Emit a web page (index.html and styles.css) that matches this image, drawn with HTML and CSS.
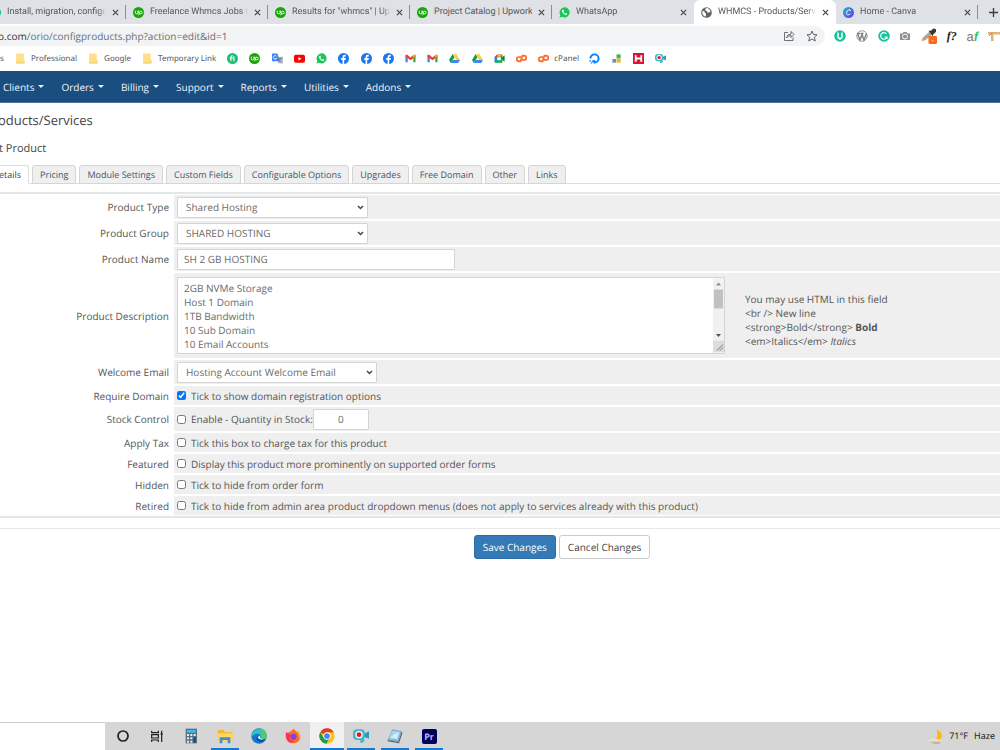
FILE: index.html
```html
<!DOCTYPE html>
<html lang="en">
<head>
<meta charset="utf-8">
<title>WHMCS - Products/Services</title>
<link rel="stylesheet" href="styles.css">
</head>
<body>
<svg class="defs" aria-hidden="true">
  <symbol id="up" viewBox="0 0 24 24"><circle cx="12" cy="12" r="12" fill="#14a800"/><path d="M5 8v4a3 3 0 0 0 6 0V8c1 4 3 7 6 7a3 3 0 1 0-3-3l-1.500 6" fill="none" stroke="#fff" stroke-width="2"/></symbol>
  <symbol id="fi" viewBox="0 0 24 24"><circle cx="12" cy="12" r="12" fill="#1dbf73"/><path d="M6 11h9v7M8.500 18V9q0-3 4-3M15 7v2" fill="none" stroke="#fff" stroke-width="2.400"/></symbol>
  <symbol id="wa" viewBox="0 0 24 24"><path d="M1 23l1.800-5.500A11 11 0 1 1 7 21.500z" fill="#20c45a"/><path d="M8 6q-3 2-1 5 3 6 8 6.500 3-.5 3-3l-3-1.500-1.500 1.500Q11 13.500 9.500 11L11 9.500 9.500 6z" fill="#fff"/></symbol>
  <symbol id="fb" viewBox="0 0 24 24"><circle cx="12" cy="12" r="12" fill="#1877f2"/><path d="M10 24v-9H7v-4h3V9q0-5 4.500-5H17v3.500h-2q-1.500 0-1.500 2V11H17l-.5 4h-3v9z" fill="#fff"/></symbol>
  <symbol id="gm" viewBox="0 0 24 24"><path d="M1 5v15h5V10z" fill="#4285f4"/><path d="M23 5v15h-5V10z" fill="#34a853"/><path d="M1 4l4 0 7 6 7-6h4v4l-11 8L1 8z" fill="#ea4335"/><path d="M18 5l3-1q2 0 2 3l-5 4z" fill="#fbbc04"/></symbol>
  <symbol id="gd" viewBox="0 0 24 24"><path d="M8 2l4 7-8 13-4-7z" fill="#0f9d58"/><path d="M8 2h8l8 13h-8z" fill="#ffcd40"/><path d="M8 15h16l-4 7H4z" fill="#4285f4"/></symbol>
  <symbol id="meet" viewBox="0 0 24 24"><path d="M1 9l6-6h11v6H7v10H1z" fill="#2684fc"/><path d="M7 3h11v5H7z" fill="#ffba00"/><path d="M7 16h11v5H3q-2 0-2-2z" fill="#00ac47"/><path d="M1 9l6-6v6z" fill="#ea4335"/><path d="M15 12l8-7v14z" fill="#00832d"/><path d="M15 5h3v14h-3z" fill="#00ac47"/></symbol>
  <symbol id="cp" viewBox="0 0 24 24"><path d="M11 9H6a4 4 0 0 0 0 9h4l4-12h4a4.500 4.500 0 0 1 0 9h-5" fill="none" stroke="#ff6c2c" stroke-width="4"/></symbol>
  <symbol id="tr" viewBox="0 0 24 24"><path d="M9 8h15v15H14z" fill="#b9bdc3"/><path d="M0 1h12l5 17H0z" fill="#4285f4"/><path d="M10 7a4 4 0 1 0 0 5H7" fill="none" stroke="#fff" stroke-width="1.600"/><path d="M14 12h8M18 10v2q0 5-4 8M15 13q2 5 6 7" fill="none" stroke="#6b7480" stroke-width="1.600"/></symbol>
  <symbol id="yt" viewBox="0 0 24 24"><rect y="4" width="24" height="17" rx="4" fill="#f00"/><path d="M9.500 8.500v8l7-4z" fill="#fff"/></symbol>
  <symbol id="oc" viewBox="0 0 24 24"><path d="M3 12a9 9 0 1 1 9 9v-5" fill="none" stroke="#0080ff" stroke-width="4.200"/><path d="M7 16h5v4H7zM4 20h3v3H4zM1 16h3v3H1z" fill="#0080ff"/></symbol>
  <symbol id="sq" viewBox="0 0 24 24"><path d="M12 3h9v9h-9z" fill="#4caf50"/><path d="M3 13h8v8H3z" fill="#7986cb"/><path d="M12 13h9v8h-9z" fill="#f4b619"/></symbol>
  <symbol id="hh" viewBox="0 0 24 24"><path d="M0 0h24v24H0z" fill="#db1430"/><path d="M4 5h4v5h8V5h4v14h-4v-5H8v5H4z" fill="#fff"/></symbol>
  <symbol id="rec" viewBox="0 0 24 24"><path d="M16 9l8-4v11l-8-3z" fill="#2a9eae"/><rect y="2" width="18" height="16" rx="6" fill="#3fb9ce"/><path d="M11 17h7l-3 5h-4z" fill="#3fb9ce"/><circle cx="9" cy="10" r="5.500" fill="#fff"/><circle cx="9" cy="10" r="3.600" fill="#e21b23"/></symbol>
  <symbol id="globe" viewBox="0 0 24 24"><circle cx="12" cy="12" r="11.500" fill="#5f6368"/><path d="M3 9q5-1 5 2t3 3v4l-2 3Q2 17 3 9M10 3l-1 4 4 2 1 3h4l3-2Q19 3 14 2z" fill="#fff"/></symbol>
  <symbol id="canva" viewBox="0 0 24 24"><linearGradient id="cg" x2="1" y2="1"><stop stop-color="#16b9cd"/><stop offset="1" stop-color="#7730e6"/></linearGradient><circle cx="12" cy="12" r="12" fill="url(#cg)"/><path d="M16 9q1-4-3-3-6 2-5.500 8 1.500 6 8.500 1" fill="none" stroke="#fff" stroke-width="2"/></symbol>
  <symbol id="x" viewBox="0 0 8 8"><path d="M1 1l6 6M7 1L1 7" stroke="#45484c" stroke-width="1.400"/></symbol>
  <symbol id="folder" viewBox="0 0 18 20"><path d="M1 1h14v11l2 1v6H1z" fill="#ffe08a"/><path d="M1 17h14v2H1z" fill="#f4ce67"/></symbol>
</svg>

<header class="browser">
  <div class="tabs">
    <div class="tab tab-first"><svg class="fav"><use href="#fi"/></svg><span class="tab-title">Install, migration, configuration</span><button class="close" aria-label="Close tab"><svg><use href="#x"/></svg></button></div>
    <div class="tab"><svg class="fav"><use href="#up"/></svg><span class="tab-title">Freelance Whmcs Jobs Online</span><button class="close" aria-label="Close tab"><svg><use href="#x"/></svg></button></div>
    <div class="tab"><svg class="fav"><use href="#up"/></svg><span class="tab-title">Results for "whmcs" | Upwork</span><button class="close" aria-label="Close tab"><svg><use href="#x"/></svg></button></div>
    <div class="tab"><svg class="fav"><use href="#up"/></svg><span class="tab-title tab-fits">Project Catalog | Upwork</span><button class="close" aria-label="Close tab"><svg><use href="#x"/></svg></button></div>
    <div class="tab tab-before"><svg class="fav"><use href="#wa"/></svg><span class="tab-title">WhatsApp</span><button class="close" aria-label="Close tab"><svg><use href="#x"/></svg></button></div>
    <div class="tab tab-active"><svg class="fav"><use href="#globe"/></svg><span class="tab-title">WHMCS - Products/Services</span><button class="close" aria-label="Close tab"><svg><use href="#x"/></svg></button></div>
    <div class="tab"><svg class="fav"><use href="#canva"/></svg><span class="tab-title">Home - Canva</span><button class="close" aria-label="Close tab"><svg><use href="#x"/></svg></button></div>
    <button class="new-tab" aria-label="New tab"><svg viewBox="0 0 10 10"><path d="M5 0v10M0 5h10" stroke="#3c4043" stroke-width="1.500"/></svg></button>
  </div>

  <div class="toolbar">
    <div class="omnibox">
      <span class="url"><span class="host">o.com</span>/orio/configproducts.php?action=edit&amp;id=1</span>
      <svg viewBox="0 0 24 24"><path d="M10 5H3v16h17v-6M7 16q1-8 9-8V3l6 6-6 6v-4q-6 0-9 5z" fill="none" stroke="#5f6368" stroke-width="1.800"/></svg>
      <svg viewBox="0 0 24 24"><path d="M12 2l3 7 7 .7-5.300 4.700L18.500 22 12 18l-6.500 4 1.800-7.600L2 9.700 9 9z" fill="none" stroke="#5f6368" stroke-width="2"/></svg>
    </div>
    <div class="extensions">
      <svg viewBox="0 0 24 24"><circle cx="12" cy="12" r="11.500" fill="#15c39a"/><path d="M8 5v8a4 4 0 0 0 8 0V5M12 16v4" fill="none" stroke="#fff" stroke-width="3"/></svg>
      <svg viewBox="0 0 24 24"><circle cx="12" cy="12" r="10.500" fill="none" stroke="#7d7f82" stroke-width="1.500"/><path d="M3 7l5 13 4-11 4 11 5-13M2 7h6M9 7h6" fill="none" stroke="#7d7f82" stroke-width="2.800"/></svg>
      <svg viewBox="0 0 24 24"><circle cx="12" cy="12" r="11.500" fill="#15c39a"/><path d="M17 8a6.500 6.500 0 1 0 1 6h-5M18 14v4" fill="none" stroke="#fff" stroke-width="2.400"/></svg>
      <svg viewBox="0 0 24 24"><path d="M2 7h5l2-3h6l2 3h5v13H2z" fill="#909090"/><circle cx="12" cy="13" r="5" fill="none" stroke="#fff" stroke-width="2"/></svg>
      <svg class="wide" viewBox="0 0 28 28"><path d="M1 23l2-6L15 6l5 5L8 21z" fill="#b9a18e"/><path d="M13 5l4 0 5-4q6 0 4 6l-5 5v3z" fill="#383838"/><rect x="13" y="14" width="15" height="14" rx="2" fill="#f96b1f"/><path d="M19 22h3" stroke="#ffb38a" stroke-width="2"/></svg>
      <b class="ext-f">f?</b>
      <span class="ext-af">a<i>f</i></span>
      <svg viewBox="0 0 24 24"><path d="M0 4h24v5H11v13H6V9H0z" fill="#dfb17b"/><path d="M2 12l7-7" stroke="#b88549" stroke-width="2"/></svg>
    </div>
  </div>

  <nav class="bookmarks" aria-label="Bookmarks">
    <a href="#" class="bm-cut">ls</a>
    <a href="#"><svg><use href="#folder"/></svg>Professional</a>
    <a href="#"><svg><use href="#folder"/></svg>Google</a>
    <a href="#"><svg><use href="#folder"/></svg>Temporary Link</a>
    <div class="bm-icons">
      <svg><use href="#fi"/></svg><svg><use href="#up"/></svg><svg><use href="#tr"/></svg><svg><use href="#yt"/></svg><svg><use href="#wa"/></svg><svg><use href="#fb"/></svg><svg><use href="#fb"/></svg><svg><use href="#fb"/></svg><svg><use href="#gm"/></svg><svg><use href="#gm"/></svg><svg><use href="#gd"/></svg><svg><use href="#gd"/></svg><svg><use href="#meet"/></svg><svg><use href="#cp"/></svg><svg><use href="#cp"/></svg>
    </div>
    <a href="#" class="bm-cpanel">cPanel</a>
    <div class="bm-more"><svg><use href="#oc"/></svg><svg><use href="#sq"/></svg><svg><use href="#hh"/></svg><svg><use href="#rec"/></svg></div>
  </nav>
</header>

<nav class="menu" aria-label="Main">
  <a href="#">Clients</a><a href="#">Orders</a><a href="#">Billing</a><a href="#">Support</a><a href="#">Reports</a><a href="#">Utilities</a><a href="#">Addons</a>
</nav>

<main>
  <h1>oducts/Services</h1>
  <h2>t Product</h2>

  <nav class="page-tabs" aria-label="Product sections">
    <a href="#" class="current">etails</a><a href="#">Pricing</a><a href="#">Module Settings</a><a href="#">Custom Fields</a><a href="#">Configurable Options</a><a href="#">Upgrades</a><a href="#">Free Domain</a><a href="#">Other</a><a href="#">Links</a>
  </nav>

  <form>
    <div class="fields">
      <div class="row tall"><label for="type">Product Type</label><div class="cell"><select id="type"><option>Shared Hosting</option></select></div></div>
      <div class="row tall"><label for="group">Product Group</label><div class="cell"><select id="group"><option>SHARED HOSTING</option></select></div></div>
      <div class="row tall"><label for="name">Product Name</label><div class="cell"><input class="text name" id="name" type="text" value="SH 2 GB HOSTING"></div></div>
      <div class="row area"><label for="desc">Product Description</label><div class="cell">
        <div class="editor">
          <textarea id="desc">2GB NVMe Storage
Host 1 Domain
1TB Bandwidth
10 Sub Domain
10 Email Accounts</textarea>
          <svg viewBox="0 0 11 74" aria-hidden="true"><path d="M0 0h11v62H0z" fill="#f1f1f1"/><path d="M0 62h11v12H0z" fill="#dcdcdc"/><path d="M1 11h9v19H1z" fill="#c1c1c1"/><path d="M3 7l2.500-3L8 7z" fill="#8a8a8a"/><path d="M3 55.500L5.500 58.500 8 55.500z" fill="#505050"/><path d="M4 72l6-6M7 72l3-3" stroke="#777"/></svg>
        </div>
        <p class="help">You may use HTML in this field<br>&lt;br /&gt; New line<br>&lt;strong&gt;Bold&lt;/strong&gt; <strong>Bold</strong><br>&lt;em&gt;Italics&lt;/em&gt; <em>Italics</em></p>
      </div></div>
      <div class="row tall"><label for="mail">Welcome Email</label><div class="cell"><select id="mail" class="mail"><option>Hosting Account Welcome Email</option></select></div></div>
      <div class="row"><span class="label">Require Domain</span><div class="cell"><label class="check"><input type="checkbox" checked>Tick to show domain registration options</label></div></div>
      <div class="row tall"><span class="label">Stock Control</span><div class="cell"><label class="check"><input type="checkbox">Enable - Quantity in Stock:</label><input class="text qty" type="text" value="0" aria-label="Quantity in Stock"></div></div>
      <div class="row"><span class="label">Apply Tax</span><div class="cell"><label class="check"><input type="checkbox">Tick this box to charge tax for this product</label></div></div>
      <div class="row"><span class="label">Featured</span><div class="cell"><label class="check"><input type="checkbox">Display this product more prominently on supported order forms</label></div></div>
      <div class="row"><span class="label">Hidden</span><div class="cell"><label class="check"><input type="checkbox">Tick to hide from order form</label></div></div>
      <div class="row"><span class="label">Retired</span><div class="cell"><label class="check"><input type="checkbox">Tick to hide from admin area product dropdown menus (does not apply to services already with this product)</label></div></div>
    </div>
    <div class="actions"><button type="submit" class="btn save">Save Changes</button><button type="reset" class="btn">Cancel Changes</button></div>
  </form>
</main>

<footer class="taskbar">
  <div class="search"></div>
  <div class="apps">
    <span class="app"><svg viewBox="0 0 24 24"><circle cx="12" cy="12" r="7.500" fill="none" stroke="#222" stroke-width="2.600"/></svg></span>
    <span class="app"><svg viewBox="0 0 24 24"><path d="M4 4v3h10V4M4 21v-3h10v3M4 10h10v5H4zM19 4v17M17 9h4" fill="none" stroke="#222" stroke-width="1.800"/></svg></span>
    <span class="app"><svg viewBox="0 0 24 24"><path d="M4 1h17v22H4z" fill="#5d6f7c"/><path d="M6 3h13v4H6z" fill="#39bdf2"/><path d="M6 9h3v3H6zM11 9h3v3h-3zM16 9h3v3h-3zM6 14h3v3H6zM11 14h3v3h-3zM6 19h3v3H6zM11 19h3v3h-3z" fill="#e8eef2"/><path d="M16 14h3v8h-3z" fill="#0c4b86"/></svg></span>
    <span class="app open"><svg viewBox="0 0 24 24"><path d="M1 3h9l2 3h11v15H1z" fill="#f5b92e"/><path d="M1 8h22v13H1z" fill="#ffd75e"/><path d="M4 14h16v9h-4v-5H8v5H4z" fill="#3a8edb"/></svg></span>
    <span class="app"><svg viewBox="0 0 24 24"><circle cx="12" cy="12" r="11.500" fill="#1577c9"/><path d="M1 10A11.500 11.500 0 0 1 23.500 12q0 5-6 5-4 0-3-3 1-5-4-5.500Q4 8 1 14z" fill="#2fc3c0"/><path d="M12 .5Q23 1 23.500 12q0 4-5 5-5 0-4-3 4-7-2.500-13.500z" fill="#52c96b"/><path d="M10 11q-2 8 9 7l3-1q-2 3-5 4-8 0-9-5z" fill="#0b4f9d"/><path d="M14 11q-2 5 4 6-7 1-8-3z" fill="#e5f6fa"/></svg></span>
    <span class="app"><svg viewBox="0 0 24 24"><path d="M2 6l2 2q3-3 5-3Q11 2 14 1q0 3 4 5l1-2q5 5 4 11-2 8-11 8T1 14q-1-5 1-8z" fill="#ff6a2b"/><path d="M14 1q0 3 4 5 5 5 3 11 5-6-2-13v2q-3-3-5-5z" fill="#ffc531"/><path d="M2 6l2 2q3 0 5 3l-2 5q2 4 7 3-4 5-9 1Q0 15 2 6z" fill="#f5306a"/><circle cx="13" cy="13" r="4.500" fill="#7a48d8"/></svg></span>
    <span class="app open active"><svg viewBox="0 0 24 24"><circle cx="12" cy="12" r="11.500" fill="#fbc116"/><path d="M12 12L2 6.200A11.500 11.500 0 0 1 22 6.200H12z" fill="#e33b2e"/><path d="M2 6.200A11.500 11.500 0 0 0 11 23.500L16 15l-9 0z" fill="#229a49"/><circle cx="12" cy="12" r="5.500" fill="#fff"/><circle cx="12" cy="12" r="4.300" fill="#4285f4"/></svg></span>
    <span class="app open"><svg><use href="#rec"/></svg></span>
    <span class="app open"><svg viewBox="0 0 24 24"><path d="M8 2l14 3-5 16-16-3z" fill="#7aaed0"/><path d="M8 4l12 2-4 12-13-2z" fill="#a9d4eb"/><path d="M22 5l1 3-5 15-17-3v-2l16 3z" fill="#56616b"/><path d="M5 14l12-8-2 10z" fill="#d7edf7"/></svg></span>
    <span class="app open"><b class="pr">Pr</b></span>
  </div>
  <div class="weather"><svg viewBox="0 0 24 24"><path d="M14 1q9 3 8 12-4 8-15 6 11-5 7-18z" fill="#fdb913"/><path d="M2 20q-2-4 3-4 3-3 6 0 3-2 5 1 6-1 6 2l-9 2z" fill="#f2dfc2"/><path d="M5 21h15M9 23h9" stroke="#a58e78" stroke-width="1"/></svg><span>71°F</span><span>Haze</span></div>
</footer>
</body>
</html>
```
FILE: styles.css
```css
* { box-sizing: border-box; }
body {
  margin: 0;
  min-height: 100vh;
  display: flex;
  flex-direction: column;
  overflow-x: hidden;
  background: #fff;
  color: #555;
  font: 10px/14px "Open Sans", sans-serif;
  text-rendering: geometricPrecision;
}
a { color: inherit; text-decoration: none; }
button, input, select, textarea { font: inherit; text-rendering: inherit; }
.defs { position: absolute; width: 0; height: 0; }

/* Browser window */
.browser { font-family: "Noto Sans", sans-serif; font-size: 9px; color: #54575b; }
.tabs { display: flex; height: 24px; overflow: hidden; background: #dee1e6; font-family: Roboto, sans-serif; }
.tab {
  flex: none;
  width: 142px;
  display: flex;
  align-items: center;
  gap: 6px;
  padding: 0 7px;
  position: relative;
}
.tab::after { content: ""; position: absolute; right: 0; top: 5px; width: 1px; height: 14px; background: #8b8f94; }
.tab-first { width: 126px; padding-left: 0; }
.tab-first .fav { margin-left: -10px; }
.tab-active { background: #fff; border-radius: 6px 6px 0 0; }
.tab-active::after, .tab-before::after { display: none; }
.fav { flex: none; width: 11px; height: 11px; }
.tab-title { flex: 1; overflow: hidden; white-space: nowrap; mask-image: linear-gradient(90deg, #000 92%, transparent); }
.tab-fits { mask-image: none; }
.close { display: flex; padding: 0; border: 0; background: none; }
.close svg { width: 7px; height: 7px; }
.new-tab { flex: none; padding: 0 11px; border: 0; background: none; display: flex; align-items: center; }
.new-tab svg { width: 9px; height: 9px; }
.toolbar { display: flex; height: 24px; align-items: center; }
.omnibox {
  flex: 1;
  height: 20px;
  display: flex;
  align-items: center;
  gap: 11px;
  padding-right: 7px;
  background: #f1f3f4;
  border-radius: 0 10px 10px 0;
}
.omnibox svg { width: 12px; height: 12px; }
.url { flex: 1; margin-left: -2px; font-family: "Open Sans", sans-serif; font-size: 10px; color: #6b6f73; }
.host { color: #2f3235; }
.extensions { display: flex; flex: none; width: 175px; align-items: center; justify-content: space-between; padding-left: 9px; }
.extensions svg { width: 12px; height: 12px; }
.extensions .wide { width: 16px; height: 16px; }
.ext-f { font: italic bold 12px "Liberation Serif", serif; color: #222; }
.ext-af { font: 13px "Liberation Sans", sans-serif; color: #777; }
.ext-af i { color: #35c36f; font-weight: bold; }
.bookmarks { display: flex; align-items: center; height: 23px; padding-bottom: 2px; font-size: 8px; overflow: hidden; }
.bookmarks a { display: flex; flex: none; align-items: center; gap: 5px; margin-right: 11px; }
.bookmarks .bm-cut { margin-left: -2px; }
.bookmarks svg { flex: none; width: 11px; height: 11px; }
.bm-icons { display: flex; flex: none; width: 322px; justify-content: space-between; }
.bookmarks .bm-cpanel { margin: 0 10px 0 5px; }
.bm-more { display: flex; gap: 11px; }

/* Admin menu */
.menu {
  display: flex;
  gap: 17px;
  height: 32px;
  align-items: center;
  padding: 0 3px;
  background: #1a4d80;
  border-bottom: 1px solid #4a7197;
  color: #f0f4f8;
}
.menu a { display: flex; align-items: center; gap: 4px; }
.menu a::after { content: ""; border: 3px solid transparent; border-top-color: currentColor; border-bottom: 0; }

/* Page */
main { flex: 1; overflow: hidden; }
h1, h2 { font-weight: 400; color: #444; }
h1 { margin: 7px 0 0 -2px; font-size: 13px; line-height: 20px; }
h2 { margin: 10px 0 0 -1px; font-size: 11px; line-height: 18px; }
.page-tabs { display: flex; gap: 3px; margin-top: 7px; border-bottom: 1px solid #ddd; font-size: 9px; color: #44546a; }
.page-tabs a { height: 19px; margin-bottom: -1px; padding: 2px 7px; background: #efefef; border: 1px solid #d5d5d5; border-radius: 3px 3px 0 0; }
.page-tabs .current { margin-left: -2px; padding-left: 0; background: #fff; border-color: #ddd; border-bottom-color: #fff; color: #444; }
.fields { display: grid; gap: 2px; margin-top: 8px; padding: 1px 0; border-top: 2px solid #e2e7e9; border-bottom: 2px solid #e2e7e9; }
.row { display: grid; grid-template-columns: 169px 1fr; column-gap: 5px; min-height: 19px; }
.row > label, .row > .label { text-align: right; align-self: center; }
.row.tall { min-height: 24px; }
.row.area { min-height: 85px; }
.cell { display: flex; align-items: center; padding: 0 3px; background: #efefef; }
select, .text, textarea { color: #6b6b6b; background: #fff; border: 1px solid #d4d4d4; border-radius: 1px; }
select {
  width: 191px;
  height: 21px;
  padding: 0 8px;
  appearance: none;
  background: #fff url("data:image/svg+xml,%3Csvg xmlns='http://www.w3.org/2000/svg' viewBox='0 0 7 5'%3E%3Cpath d='M1 1l2.500 2.500L6 1' fill='none' stroke='%23444' stroke-width='1.500'/%3E%3C/svg%3E") right 3px center / 7px 5px no-repeat;
}
.mail { width: 200px; }
.text { height: 21px; padding: 0 6px; }
.name { width: 278px; }
.qty { width: 56px; text-align: center; }
.editor { display: flex; flex: none; width: 548px; height: 77px; background: #fff; border: 1px solid #d4d4d4; }
textarea { flex: 1; padding: 3px 6px; border: 0; resize: none; overflow: hidden; }
.editor svg { flex: none; width: 11px; height: 75px; }
.help { margin: 8px 0 0 20px; }
.check { display: flex; align-items: center; gap: 5px; }
.check input { width: 9px; height: 9px; margin: 0; }
.actions { display: flex; justify-content: center; gap: 3px; margin-top: 10px; padding: 6px 0 0 124px; border-top: 1px solid #e8e8e8; }
.btn { height: 24px; padding: 0 8px; border: 1px solid #ccc; border-radius: 3px; background: #fff; color: #444; }
.save { background: #337ab7; border-color: #2e6da4; color: #fff; }

/* Desktop taskbar */
.taskbar { display: flex; height: 28px; background: #d6d6d6; color: #222; font-family: "Noto Sans", sans-serif; }
.search { width: 105px; background: #fff; border-top: 1px solid #ccc; }
.apps { display: flex; margin-left: 1px; }
.app { width: 34px; height: 28px; display: flex; align-items: center; justify-content: center; position: relative; }
.app svg { width: 16px; height: 16px; }
.app.open::after { content: ""; position: absolute; left: 3px; right: 3px; bottom: 0; height: 2px; background: #0f7bd6; }
.active { background: #f0f0f0; }
.app.active::after { left: 0; right: 0; }
.pr { width: 15px; height: 15px; border-radius: 2px; background: #00005b; color: #bdb0ff; font-size: 9px; line-height: 15px; text-align: center; }
.weather { display: flex; align-items: center; gap: 6px; margin-left: auto; padding-right: 5px; font-size: 9px; }
.weather svg { width: 15px; height: 15px; }
```
